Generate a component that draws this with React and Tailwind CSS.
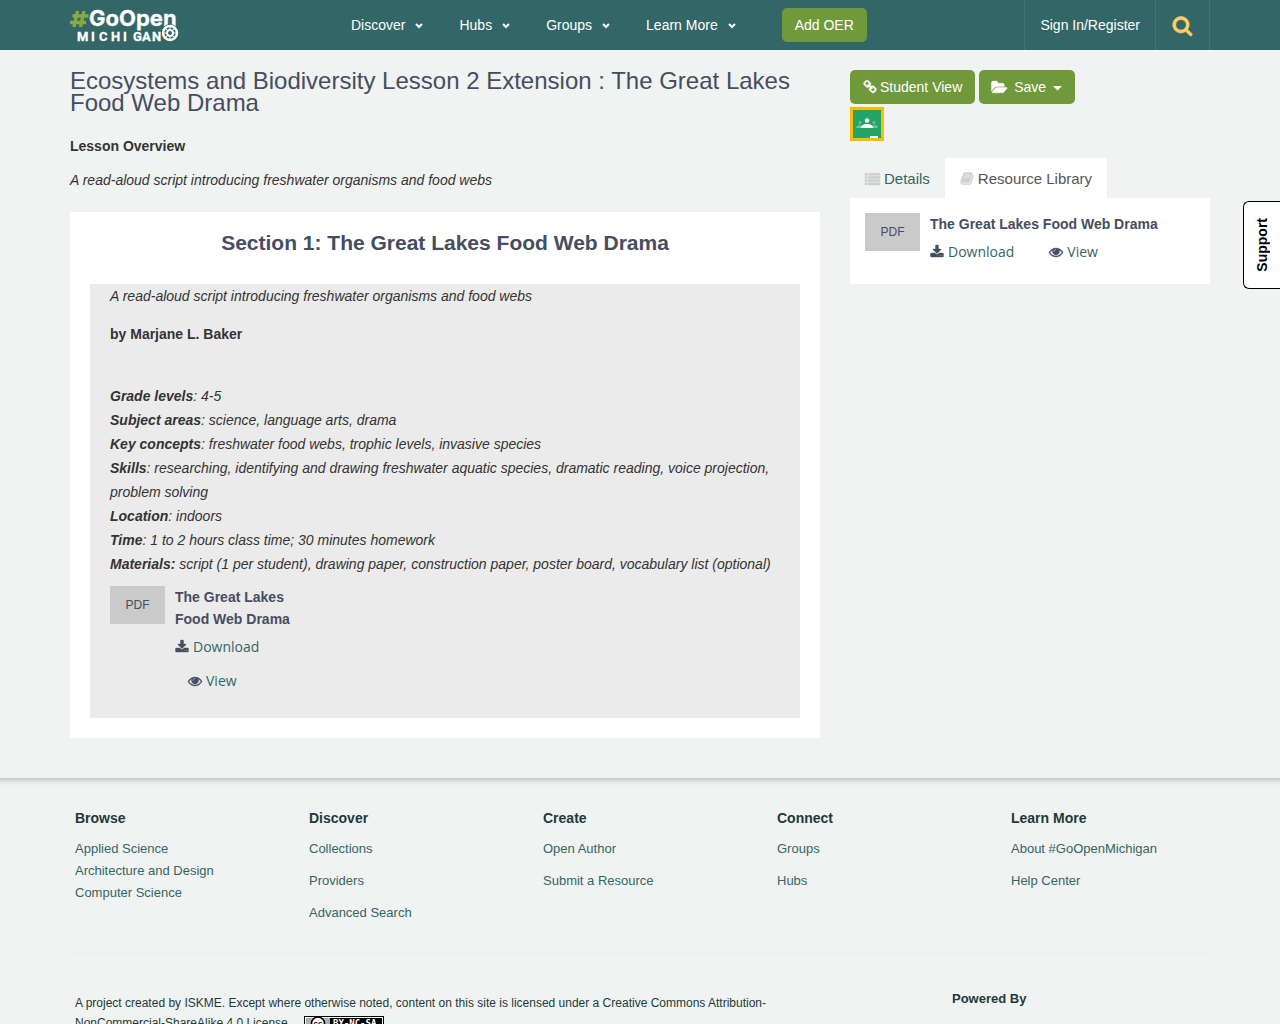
import { useState } from 'react'

const NAV = ['Discover', 'Hubs', 'Groups', 'Learn More']

const LESSON_FACTS = [
  ['Grade levels', ': 4-5'],
  ['Subject areas', ': science, language arts, drama'],
  ['Key concepts', ': freshwater food webs, trophic levels, invasive species'],
  ['Skills', ': researching, identifying and drawing freshwater aquatic species, dramatic reading, voice projection, problem solving'],
  ['Location', ': indoors'],
  ['Time', ': 1 to 2 hours class time; 30 minutes homework'],
  ['Materials:', ' script (1 per student), drawing paper, construction paper, poster board, vocabulary list (optional)'],
]

const FOOTER_COLUMNS = [
  { title: 'Browse', dense: true, links: ['Applied Science', 'Architecture and Design', 'Computer Science'] },
  { title: 'Discover', links: ['Collections', 'Providers', 'Advanced Search'] },
  { title: 'Create', links: ['Open Author', 'Submit a Resource'] },
  { title: 'Connect', links: ['Groups', 'Hubs'] },
  { title: 'Learn More', links: ['About #GoOpenMichigan', 'Help Center'] },
]

const ICONS = {
  download: 'M1344 1344q0-26-19-45t-45-19-45 19-19 45 19 45 45 19 45-19 19-45zm256 0q0-26-19-45t-45-19-45 19-19 45 19 45 45 19 45-19 19-45zm128-224v320q0 40-28 68t-68 28h-1472q-40 0-68-28t-28-68v-320q0-40 28-68t68-28h465l135 136q58 56 136 56t136-56l136-136h464q40 0 68 28t28 68zm-325-569q17 41-14 70l-448 448q-18 19-45 19t-45-19l-448-448q-31-29-14-70 17-39 59-39h256v-448q0-26 19-45t45-19h256q26 0 45 19t19 45v448h256q42 0 59 39z',
  eye: 'M1664 960q-152-236-381-353 61 104 61 225 0 185-131.5 316.5t-316.5 131.5-316.5-131.5-131.5-316.5q0-121 61-225-229 117-381 353 133 205 333.5 326.5t434.5 121.5 434.5-121.5 333.5-326.5zm-720-384q0-20-14-34t-34-14q-125 0-214.5 89.5t-89.5 214.5q0 20 14 34t34 14 34-14 14-34q0-86 61-147t147-61q20 0 34-14t14-34zm848 384q0 34-20 69-140 230-376.5 368.5t-499.5 138.5-499.5-139-376.5-368q-20-35-20-69t20-69q140-229 376.5-368t499.5-139 499.5 139 376.5 368q20 35 20 69z',
  link: 'M1520 1216q0-40-28-68l-208-208q-28-28-68-28-42 0-72 32 3 3 19 18.5t21.5 21.5 15 19 13 25.5 3.5 27.5q0 40-28 68t-68 28q-15 0-27.5-3.5t-25.5-13-19-15-21.5-21.5-18.5-19q-33 31-33 73 0 40 28 68l206 207q27 27 68 27 40 0 68-26l147-146q28-28 28-67zm-703-705q0-40-28-68l-206-207q-28-28-68-28-39 0-68 27l-147 146q-28 28-28 67 0 40 28 68l208 208q27 27 68 27 42 0 72-31-3-3-19-18.5t-21.5-21.5-15-19-13-25.5-3.5-27.5q0-40 28-68t68-28q15 0 27.5 3.5t25.5 13 19 15 21.5 21.5 18.5 19q33-31 33-73zm895 705q0 120-85 203l-147 146q-83 83-203 83-121 0-204-85l-206-207q-83-83-83-203 0-123 88-209l-88-88q-86 88-208 88-120 0-204-84l-208-208q-84-84-84-204t85-203l147-146q83-83 203-83 121 0 204 85l206 207q83 83 83 203 0 123-88 209l88 88q86-88 208-88 120 0 204 84l208 208q84 84 84 204z',
  folder: 'M1815 952q0 31-31 66l-336 396q-43 51-120.5 86.5t-143.5 35.5h-1088q-34 0-60.5-13t-26.5-43q0-31 31-66l336-396q43-51 120.5-86.5t143.5-35.5h1088q34 0 60.5 13t26.5 43zm-343-344v160h-832q-94 0-197 47.5t-164 119.5l-337 396-5 6q0-4-.5-12.5t-.5-12.5v-960q0-92 66-158t158-66h320q92 0 158 66t66 158v32h544q92 0 158 66t66 158z',
  list: 'M0 256h256v256h-256zM384 256h1408v256h-1408zM0 640h256v256h-256zM384 640h1408v256h-1408zM0 1024h256v256h-256zM384 1024h1408v256h-1408zM0 1408h256v256h-256zM384 1408h1408v256h-1408z',
  book: 'M1703 478q40 57 18 129l-275 906q-19 64-76.5 107.5t-122.5 43.5h-923q-77 0-148.5-53.5t-99.5-131.5q-24-67-2-127 0-4 3-27t4-37q1-8-3-21.5t-3-19.5q2-11 8-21t16.5-23.5 16.5-23.5q23-38 45-91.5t30-91.5q3-10 .5-30t-.5-28q3-11 17-28t17-23q21-36 42-92t25-90q1-9-2.5-32t.5-28q4-13 22-30.5t22-22.5q19-26 42.5-84.5t27.5-96.5q1-8-3-25.5t-2-26.5q2-8 9-18t18-23 17-21q8-12 16.5-30.5t15-35 16-36 19.5-32 26.5-23.5 36-11.5 47.5 5.5l-1 3q38-9 51-9h761q74 0 114 56t18 130l-274 906q-36 119-71.5 153.5t-128.5 34.5h-869q-27 0-38 15-11 16-1 43 24 70 144 70h923q29 0 56-15.5t35-41.5l300-987q7-22 5-57 38 15 59 43zm-1064 2q-4 13 2 22.5t20 9.5h608q13 0 25.5-9.5t16.5-22.5l21-64q4-13-2-22.5t-20-9.5h-608q-13 0-25.5 9.5t-16.5 22.5zm-83 256q-4 13 2 22.5t20 9.5h608q13 0 25.5-9.5t16.5-22.5l21-64q4-13-2-22.5t-20-9.5h-608q-13 0-25.5 9.5t-16.5 22.5z',
  search: 'M1216 832q0-185-131.5-316.5t-316.5-131.5-316.5 131.5-131.5 316.5 131.5 316.5 316.5 131.5 316.5-131.5 131.5-316.5zm512 832q0 52-38 90t-90 38q-54 0-90-38l-343-342q-179 124-399 124-143 0-273.5-55.5t-225-150-150-225-55.5-273.5 55.5-273.5 150-225 225-150 273.5-55.5 273.5 55.5 225 150 150 225 55.5 273.5q0 220-124 399l343 343q37 37 37 90z',
}

function Icon({ name, className = 'w-3.5 h-3.5' }) {
  return (
    <svg
      viewBox="0 0 1792 1792"
      fill="currentColor"
      stroke="currentColor"
      strokeWidth="50"
      aria-hidden="true"
      className={`shrink-0 overflow-visible ${className}`}
    >
      <path d={ICONS[name]} />
    </svg>
  )
}

function Logo() {
  return (
    <svg width="110" height="50" viewBox="0 0 110 50" role="img" aria-label="#GoOpen Michigan">
      {/* Hash mark */}
      <path d="M7.500 11L4 27M14 11l-3.500 16M2.500 16H18.500M0 22.500h16" fill="none" stroke="#88a943" strokeWidth="3.400" />
      <g fontWeight="700" fill="#fff" stroke="#fff" strokeWidth="0.300">
        <text x="19" y="26" fontSize="22" fontFamily="Inter, sans-serif">GoOpen</text>
        <text x="7 21 29 41 53 63 72 82" y="41" fontSize="13" fontFamily="Roboto, sans-serif">MICHIGAN</text>
      </g>
      {/* Wheel */}
      <circle cx="100" cy="33" r="9" fill="#336666" />
      <circle cx="100" cy="33" r="7" fill="none" stroke="#fff" strokeWidth="2.500" />
      <circle cx="100" cy="33" r="3" fill="none" stroke="#fff" strokeWidth="2" />
      <path d="M100 26v3M100 37v3M93 33h3M104 33h3M95 28l2 2M103 36l2 2M95 38l2-2M103 30l2-2" stroke="#fff" />
    </svg>
  )
}

function Header() {
  return (
    <header className="bg-[#336666] text-white">
      <div className="mx-auto flex h-[50px] w-full max-w-[1170px] items-center px-[15px]">
        <a href="#home" className="mr-[155px] shrink-0"><Logo /></a>
        <nav className="flex items-center">
          {NAV.map((label) => (
            <button key={label} type="button" className="flex items-center gap-2.5 whitespace-nowrap pl-4 pr-5 text-sm">
              {label}
              <svg width="8" height="8" viewBox="0 0 8 8" fill="none" stroke="currentColor" strokeWidth="2" aria-hidden="true">
                <path d="M1 3l3 3 3-3" />
              </svg>
            </button>
          ))}
        </nav>
        <a href="#add" className="ml-[26px] flex h-[34px] items-center whitespace-nowrap rounded-[5px] bg-[#70993b] px-[13px] text-sm">Add OER</a>
        <div className="ml-auto flex h-full border-x border-[#447474]">
          <a href="#signin" className="flex items-center whitespace-nowrap px-[15px] text-sm">Sign In/Register</a>
          <button type="button" aria-label="Search" className="border-l border-[#447474] px-4 text-[#ffcc66]">
            <Icon name="search" className="h-[21px] w-[21px]" />
          </button>
        </div>
      </div>
    </header>
  )
}

function ResourceItem({ stacked }) {
  return (
    <div className="flex items-start gap-2.5">
      <div className="flex h-[38px] w-[55px] shrink-0 items-center justify-center bg-[#cacaca] text-xs text-[#464d61]">PDF</div>
      <div className={stacked ? 'w-[130px]' : ''}>
        <h3 className="text-sm/[22px] font-bold text-[#464d61]">The Great Lakes Food Web Drama</h3>
        <div className={stacked ? 'flex flex-col items-start' : 'flex gap-[22px]'}>
          <a href="#download" className="flex h-[34px] items-center gap-1 font-['Open_Sans',sans-serif] text-sm text-[#336666]">
            <Icon name="download" className="h-3.5 w-3.5 text-[#464d61]" />
            Download
          </a>
          <a href="#view" className="flex h-[34px] items-center gap-1 pl-[13px] font-['Open_Sans',sans-serif] text-sm text-[#336666]">
            <Icon name="eye" className="h-3.5 w-3.5 text-[#464d61]" />
            View
          </a>
        </div>
      </div>
    </div>
  )
}

function Lesson() {
  return (
    <main className="min-w-0 flex-1">
      <h1 className="text-2xl/[22px] text-[#464d61]">
        Ecosystems and Biodiversity Lesson 2 Extension : The Great Lakes Food Web Drama
      </h1>
      <h2 className="mt-5 text-sm/6 font-bold">Lesson Overview</h2>
      <p className="mt-2.5 text-sm/6 italic">A read-aloud script introducing freshwater organisms and food webs</p>

      <section className="mt-5 bg-white p-5">
        <h2 className="text-center text-[21px]/[22px] font-bold text-[#464d61]">Section 1: The Great Lakes Food Web Drama</h2>
        <div className="mt-[30px] bg-[#ebebeb] px-5 pb-5 text-sm/6">
          <p className="italic">A read-aloud script introducing freshwater organisms and food webs</p>
          <p className="mt-3.5 font-bold">by Marjane L. Baker</p>
          <div className="mt-[38px] italic">
            {LESSON_FACTS.map(([label, text]) => (
              <p key={label}><b>{label}</b>{text}</p>
            ))}
          </div>
          <div className="pt-2.5">
            <ResourceItem stacked />
          </div>
        </div>
      </section>
    </main>
  )
}

function Sidebar() {
  const [tab, setTab] = useState('library')
  const tabClass = (name) =>
    `flex h-10 items-center gap-1 px-[15px] pt-0.5 text-[15px] ${tab === name ? 'bg-white text-[#555555]' : 'text-[#336666]'}`

  return (
    <aside className="w-[360px] shrink-0">
      <div className="flex gap-1 text-sm text-white">
        <button type="button" className="flex h-[34px] items-center gap-[3px] rounded-[5px] bg-[#70993b] px-[13px]">
          <Icon name="link" />
          Student View
        </button>
        <button type="button" className="flex h-[34px] items-center gap-[7px] rounded-[5px] bg-[#70993b] px-[13px]">
          <Icon name="folder" className="h-[15px] w-[15px]" />
          Save
          <svg width="9" height="9" viewBox="0 0 9 9" fill="currentColor" aria-hidden="true"><path d="M0 3h9l-4.500 4.500z" /></svg>
        </button>
      </div>
      <button type="button" aria-label="Share to Google Classroom" className="mt-[3px] block">
        <svg width="34" height="34" viewBox="0 0 34 34">
          <path d="M0 0h34v34H0z" fill="#fbbc04" />
          <path d="M3 3h28v28H3z" fill="#22a565" />
          <g fill="#6dc49a">
            <circle cx="10" cy="15.500" r="1.500" />
            <circle cx="24" cy="15.500" r="1.500" />
            <path d="M6 21c0-4 7-4 8 0zM20 21c1-4 8-4 8 0z" />
          </g>
          <circle cx="17" cy="13.500" r="2.200" fill="#fff" />
          <path d="M11 21c0-5.500 12-5.500 12 0z" fill="#fff" />
          <path d="M20 29h8v2h-8z" fill="#fff" />
        </svg>
      </button>

      <div role="tablist" className="mt-[17px] flex">
        <button type="button" role="tab" aria-selected={tab === 'details'} onClick={() => setTab('details')} className={tabClass('details')}>
          <Icon name="list" className="mb-0.5 h-[15px] w-[15px] text-[#d0d0d0]" />
          Details
        </button>
        <button type="button" role="tab" aria-selected={tab === 'library'} onClick={() => setTab('library')} className={tabClass('library')}>
          <Icon name="book" className="mb-0.5 h-[15px] w-3.5 text-[#d0d0d0]" />
          Resource Library
        </button>
      </div>
      <div role="tabpanel" className="bg-white p-[15px]">
        <ResourceItem />
      </div>
    </aside>
  )
}

function LicenseBadge() {
  return (
    <svg width="80" height="15" viewBox="0 0 80 15" role="img" aria-label="CC BY-NC-SA" className="ml-[13px] inline-block align-middle">
      <path d="M0 0h80v15H0z" fill="#000" />
      <path d="M1 1h78v13H1z" fill="#fff" />
      <path d="M2 2h24v11H2z" fill="#aab2ab" />
      <path d="M26 2h52v11H26z" fill="#000" />
      <circle cx="14" cy="7.500" r="6.500" fill="#fff" stroke="#000" strokeWidth="1.500" />
      <text x="14" y="10" textAnchor="middle" fontSize="8" fontWeight="700" fontFamily="Liberation Sans, sans-serif">cc</text>
      <text x="29" y="10" fontSize="9" fontWeight="700" fill="#fff" fontFamily="DejaVu Sans Mono, monospace">BY-NC-SA</text>
    </svg>
  )
}

function Footer() {
  return (
    <footer className="mt-10 pt-[30px] shadow-[inset_0_7px_6px_-6px_rgba(0,0,0,0.3)]">
      <div className="mx-auto w-full max-w-[1170px] px-[15px]">
        <div className="-mr-[35px] grid grid-cols-5 pl-[5px]">
          {FOOTER_COLUMNS.map(({ title, dense, links }) => (
            <div key={title}>
              <h3 className="text-sm/5 font-bold text-[#1d3a3a]">{title}</h3>
              <ul className={dense ? 'mt-2.5' : 'mt-2.5 space-y-2.5'}>
                {links.map((label) => (
                  <li key={label} className="text-[13px]/[22px]">
                    <a href="#browse" className="text-[#336666]">{label}</a>
                  </li>
                ))}
              </ul>
            </div>
          ))}
        </div>
        <hr className="mt-[29px] border-[#eaeeec]" />
        <div className="flex pl-[5px] pt-[39px] text-[#1d3a3a]">
          <p className="w-[700px] text-xs/5">
            A project created by ISKME. Except where otherwise noted, content on this site is licensed under a Creative Commons Attribution-NonCommercial-ShareAlike 4.0 License.
            <LicenseBadge />
          </p>
          <h3 className="ml-auto w-[258px] text-[13px]/[12px] font-bold">Powered By</h3>
        </div>
      </div>
    </footer>
  )
}

export default function App() {
  return (
    <div className="min-h-screen bg-[#f0f3f2] font-['Liberation_Sans',Arial,sans-serif] text-[#333333]">
      <Header />
      <div className="mx-auto flex w-full max-w-[1170px] gap-[30px] px-[15px] pt-5">
        <Lesson />
        <Sidebar />
      </div>
      <Footer />
      <button
        type="button"
        className="fixed right-0 top-[201px] flex h-[88px] w-[37px] items-center justify-center rounded-l-md border border-r-0 border-black bg-white text-sm font-bold text-black"
      >
        <span className="rotate-180 [writing-mode:vertical-rl]">Support</span>
      </button>
    </div>
  )
}
